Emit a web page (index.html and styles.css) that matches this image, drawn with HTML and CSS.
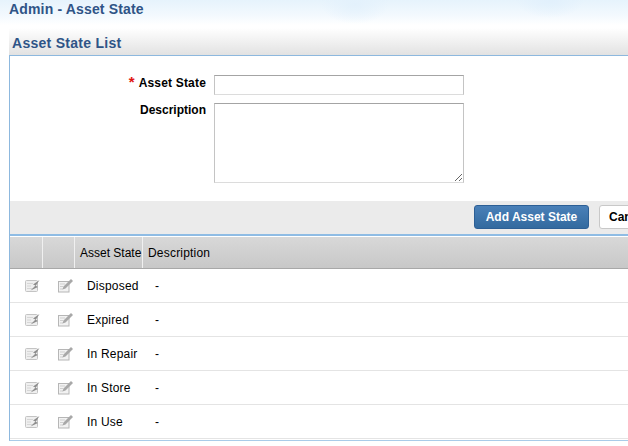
FILE: index.html
```html
<!DOCTYPE html>
<html lang="en">
<head>
    <meta charset="UTF-8">
    <title>Admin - Asset State</title>
    <link rel="stylesheet" href="styles.css">
</head>
<body>

<!-- page title -->
<div class="page-title">Admin - Asset State</div>

<div class="panel">
    <div class="panel-title">Asset State List</div>

    <div class="panel-body">
        <!-- add form -->
        <div class="form">
            <div class="form-row">
                <label class="form-label label-name"><span class="required">*</span>Asset State</label>
                <input type="text" class="form-input">
            </div>
            <div class="form-row">
                <label class="form-label">Description</label>
                <textarea class="form-text"></textarea>
            </div>
        </div>

        <div class="toolbar">
            <button class="btn btn-primary">Add Asset State</button>
            <button class="btn">Cancel</button>
        </div>

        <!-- list -->
        <div class="list">
            <div class="list-row list-head">
                <div class="cell cell-del"></div>
                <div class="cell cell-edit"></div>
                <div class="cell cell-name">Asset State</div>
                <div class="cell cell-desc">Description</div>
            </div>

            <div class="list-row">
                <div class="cell cell-del"><svg class="icon" viewBox="0 0 16 14"><use href="#icon-delete"></use></svg></div>
                <div class="cell cell-edit"><svg class="icon" viewBox="0 0 16 14"><use href="#icon-edit"></use></svg></div>
                <div class="cell cell-name">Disposed</div>
                <div class="cell cell-desc">-</div>
            </div>
            <div class="list-row">
                <div class="cell cell-del"><svg class="icon" viewBox="0 0 16 14"><use href="#icon-delete"></use></svg></div>
                <div class="cell cell-edit"><svg class="icon" viewBox="0 0 16 14"><use href="#icon-edit"></use></svg></div>
                <div class="cell cell-name">Expired</div>
                <div class="cell cell-desc">-</div>
            </div>
            <div class="list-row">
                <div class="cell cell-del"><svg class="icon" viewBox="0 0 16 14"><use href="#icon-delete"></use></svg></div>
                <div class="cell cell-edit"><svg class="icon" viewBox="0 0 16 14"><use href="#icon-edit"></use></svg></div>
                <div class="cell cell-name">In Repair</div>
                <div class="cell cell-desc">-</div>
            </div>
            <div class="list-row">
                <div class="cell cell-del"><svg class="icon" viewBox="0 0 16 14"><use href="#icon-delete"></use></svg></div>
                <div class="cell cell-edit"><svg class="icon" viewBox="0 0 16 14"><use href="#icon-edit"></use></svg></div>
                <div class="cell cell-name">In Store</div>
                <div class="cell cell-desc">-</div>
            </div>
            <div class="list-row">
                <div class="cell cell-del"><svg class="icon" viewBox="0 0 16 14"><use href="#icon-delete"></use></svg></div>
                <div class="cell cell-edit"><svg class="icon" viewBox="0 0 16 14"><use href="#icon-edit"></use></svg></div>
                <div class="cell cell-name">In Use</div>
                <div class="cell cell-desc">-</div>
            </div>
        </div>
    </div>
</div>

<!-- row icons -->
<svg class="icon-defs" width="0" height="0">
    <symbol id="icon-delete" viewBox="0 0 16 14">
        <rect x="1.5" y="1.5" width="12" height="11" rx="1" fill="#efefef" stroke="#c4c4c4"/>
        <path d="M3 4.5h6M3 7h4M3 9.5h7" stroke="#d6d6d6"/>
        <path d="M15.5 1 L9 5.5 L11.5 6.5 L6.5 11.5 L14 8 L11.8 6.8 Z" fill="#8e8e8e"/>
    </symbol>
    <symbol id="icon-edit" viewBox="0 0 16 14">
        <rect x="1.5" y="2.5" width="10.5" height="10.5" fill="#f2f2f2" stroke="#b6b6b6"/>
        <path d="M3 5h5M3 7.5h3M3 10h3" stroke="#cfcfcf"/>
        <path d="M14 0 L16 2 L8.5 9.5 L5.5 10.5 L6.5 7.5 Z" fill="#a8a8a8"/>
    </symbol>
</svg>

</body>
</html>
```

FILE: styles.css
```css
html, body {
    height: 100%;
}
body {
    margin: 0;
    padding: 0;
    overflow: hidden;
    font-family: "Liberation Sans", Arial, sans-serif;
    font-size: 12px;
    color: #000;
    background-color: #fff;
}
.page-title {
    height: 28px;
    padding: 1px 0 0 9px;
    box-sizing: border-box;
    font-size: 14px;
    font-weight: bold;
    line-height: 17px;
    letter-spacing: 0.16px;
    color: #2f5487;
    background:
        radial-gradient(ellipse 34px 20px at 355px 4px, #e3f1fc 0%, transparent 100%),
        radial-gradient(ellipse 34px 18px at 550px 0, #e1f0fc 0%, transparent 100%),
        linear-gradient(to bottom, #e6f3fc 0%, #f3f9fe 55%, #fff 90%);
}
.panel {
    width: 760px;
    margin-left: 9px;
}
.panel-title {
    height: 27px;
    padding: 7px 0 0 3px;
    box-sizing: border-box;
    font-size: 14px;
    font-weight: bold;
    line-height: 16px;
    letter-spacing: 0.28px;
    color: #2f5487;
    background: linear-gradient(to bottom, #fff 0%, #e2e2e2 100%);
}
.panel-body {
    border-top: 1px solid #8db8de;
    border-left: 1px solid #8db8de;
    border-bottom: 1px solid #a9cbe8;
}
.form {
    height: 145px;
    padding-top: 19px;
    box-sizing: border-box;
}
.form-row {
    display: flex;
    align-items: flex-start;
    margin-bottom: 8px;
}
.form-label {
    width: 196px;
    margin-right: 8px;
    text-align: right;
    font-weight: bold;
    line-height: 14px;
}
.label-name {
    letter-spacing: 0.18px;
}
.required {
    color: #e0140f;
    font-size: 15px;
    margin-right: 4px;
}
.form-input, .form-text {
    display: block;
    box-sizing: border-box;
    width: 250px;
    margin: 0;
    padding: 1px 3px;
    border: 1px solid #c4c4c4;
    border-top-color: #a4a4a4;
    border-bottom-color: #dcdcdc;
    background-color: #fff;
    font-family: "Liberation Sans", Arial, sans-serif;
    font-size: 12px;
}
.form-input {
    height: 20px;
}
.form-text {
    height: 80px;
}
.toolbar {
    height: 33px;
    display: flex;
    align-items: flex-start;
    gap: 10px;
    padding: 4px 0 0 464px;
    box-sizing: border-box;
    background-color: #ebebeb;
}
.btn {
    height: 24px;
    padding: 0 9px;
    box-sizing: border-box;
    font-family: "Liberation Sans", Arial, sans-serif;
    font-size: 12px;
    font-weight: bold;
    border: 1px solid #c8c8c8;
    border-radius: 3px;
    background-color: #fff;
    color: #000;
}
.btn-primary {
    width: 115px;
    padding: 0;
    border-color: #2d5f95;
    color: #fff;
    background: linear-gradient(to bottom, #4a80b8 0%, #336a9f 100%);
}
.list {
    border-top: 2px solid #8fbce4;
    padding: 1px 0 1px;
}
.list-row {
    display: flex;
    height: 34px;
    border-bottom: 1px solid #e4e4e4;
    box-sizing: border-box;
    letter-spacing: 0.2px;
}
.list-head {
    height: 32px;
    border-bottom: 1px solid #a8a8a8;
    background: linear-gradient(to bottom, #d8d8d8 0%, #c8c8c8 100%);
    letter-spacing: 0;
}
.cell {
    display: flex;
    align-items: center;
    box-sizing: border-box;
}
.list-head .cell {
    border-right: 1px solid #f0f0f0;
}
.cell-del {
    width: 33px;
    padding-left: 14px;
}
.cell-edit {
    width: 32px;
    padding-left: 14px;
}
.cell-name {
    width: 68px;
    padding-left: 12px;
    white-space: nowrap;
}
.list-head .cell-name {
    padding-left: 5px;
}
.cell-desc {
    flex: 1;
    padding-left: 12px;
}
.list-head .cell-desc {
    padding-left: 5px;
    letter-spacing: 0.2px;
}
.icon {
    width: 16px;
    height: 14px;
    flex: none;
}
.icon-defs {
    position: absolute;
}
```
